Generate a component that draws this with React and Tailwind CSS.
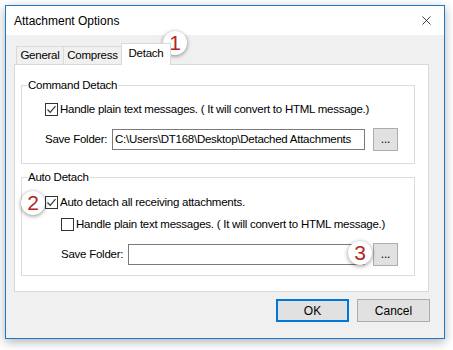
import { X } from 'lucide-react';

const font = { fontFamily: '"Liberation Sans", Arial, sans-serif' };

function Check({ checked }) {
  return (
    <span className="w-[13px] h-[13px] border border-[#333333] bg-white flex items-center justify-center shrink-0">
      {checked && (
        <svg width="11" height="11" viewBox="0 0 11 11">
          <polyline points="1.5,5.5 4.2,8.3 9.5,2.2" fill="none" stroke="#333333" strokeWidth="1.2" />
        </svg>
      )}
    </span>
  );
}

function Badge({ n, className }) {
  return (
    <div className={`absolute w-[24px] h-[24px] rounded-full bg-white shadow-[0_1px_4px_rgba(0,0,0,0.45)] flex items-center justify-center text-[21px] leading-[24px] text-[#b3261e] ${className}`}>
      {n}
    </div>
  );
}

function Browse() {
  return (
    <button className="w-[25px] h-[23px] border border-[#adadad] bg-[#e1e1e1] text-[12px] leading-none flex items-end justify-center pb-[5px]">
      ...
    </button>
  );
}

export default function App() {
  return (
    <div className="w-[453px] h-[350px] bg-white pt-[5px] pl-[5px]" style={font}>
      <div className="relative w-[440px] h-[334px] border border-[#1979ca] bg-[#f0f0f0] shadow-[0_3px_10px_rgba(0,0,0,0.3)] flex flex-col text-[11.5px] tracking-[-0.25px] text-black whitespace-nowrap">
        <div className="h-[29px] bg-white flex items-center justify-between pl-[8px] pr-[10px]">
          <span className="text-[12px] tracking-normal mt-[1px]">Attachment Options</span>
          <X size={15} strokeWidth={1.2} className="text-black" />
        </div>

        <div className="px-[8px] pt-[8px]">
          <div className="flex items-end pl-[2px] h-[21px] relative z-10">
            <div className="h-[18px] w-[48px] border border-[#d9d9d9] border-b-0 flex items-center justify-center">General</div>
            <div className="h-[18px] w-[58px] border border-[#d9d9d9] border-b-0 border-l-0 flex items-center justify-center">Compress</div>
            <div className="h-[22px] w-[50px] bg-white border border-[#d9d9d9] border-b-0 -ml-[1px] -mb-[1px] flex items-center justify-center pb-[2px]">Detach</div>
          </div>

          <div className="w-[415px] h-[228px] bg-white border border-[#d9d9d9] pt-[13px] pl-[6px]">
            <fieldset className="w-[394px] h-[86px] border border-[#dcdcdc]">
              <legend className="ml-[5px] px-[1px] leading-[15px]">Command Detach</legend>
              <div className="flex items-center gap-[2px] pl-[23px] mt-[9px] h-[15px]">
                <Check checked />
                <span>Handle plain text messages. ( It will convert to HTML message.)</span>
              </div>
              <div className="flex items-center pl-[23px] mt-[11px] h-[23px]">
                <span className="w-[67px]">Save Folder:</span>
                <div className="w-[253px] h-[21px] border border-[#7a7a7a] bg-white flex items-center pl-[2px] overflow-hidden">
                  C:\Users\DT168\Desktop\Detached Attachments
                </div>
                <div className="ml-[8px]"><Browse /></div>
              </div>
            </fieldset>

            <fieldset className="w-[394px] h-[106px] border border-[#dcdcdc] mt-[6px]">
              <legend className="ml-[5px] px-[1px] leading-[15px]">Auto Detach</legend>
              <div className="flex items-center gap-[2px] pl-[23px] mt-[10px] h-[15px]">
                <Check checked />
                <span>Auto detach all receiving attachments.</span>
              </div>
              <div className="flex items-center gap-[2px] pl-[39px] mt-[7px] h-[15px]">
                <Check />
                <span>Handle plain text messages. ( It will convert to HTML message.)</span>
              </div>
              <div className="flex items-center pl-[39px] mt-[11px] h-[23px]">
                <span className="w-[67px]">Save Folder:</span>
                <div className="w-[237px] h-[21px] border border-[#7a7a7a] bg-white" />
                <div className="ml-[8px]"><Browse /></div>
              </div>
            </fieldset>
          </div>
        </div>

        <div className="flex justify-end gap-[8px] pr-[14px] mt-[7px]">
          <button className="w-[73px] h-[23px] border-2 border-[#0078d7] bg-[#e1e1e1] text-[12px] tracking-normal">OK</button>
          <button className="w-[73px] h-[23px] border border-[#adadad] bg-[#e1e1e1] text-[12px] tracking-normal">Cancel</button>
        </div>

        <Badge n="1" className="left-[157px] top-[25px]" />
        <Badge n="2" className="left-[15px] top-[185px]" />
        <Badge n="3" className="left-[342px] top-[235px]" />
      </div>
    </div>
  );
}
